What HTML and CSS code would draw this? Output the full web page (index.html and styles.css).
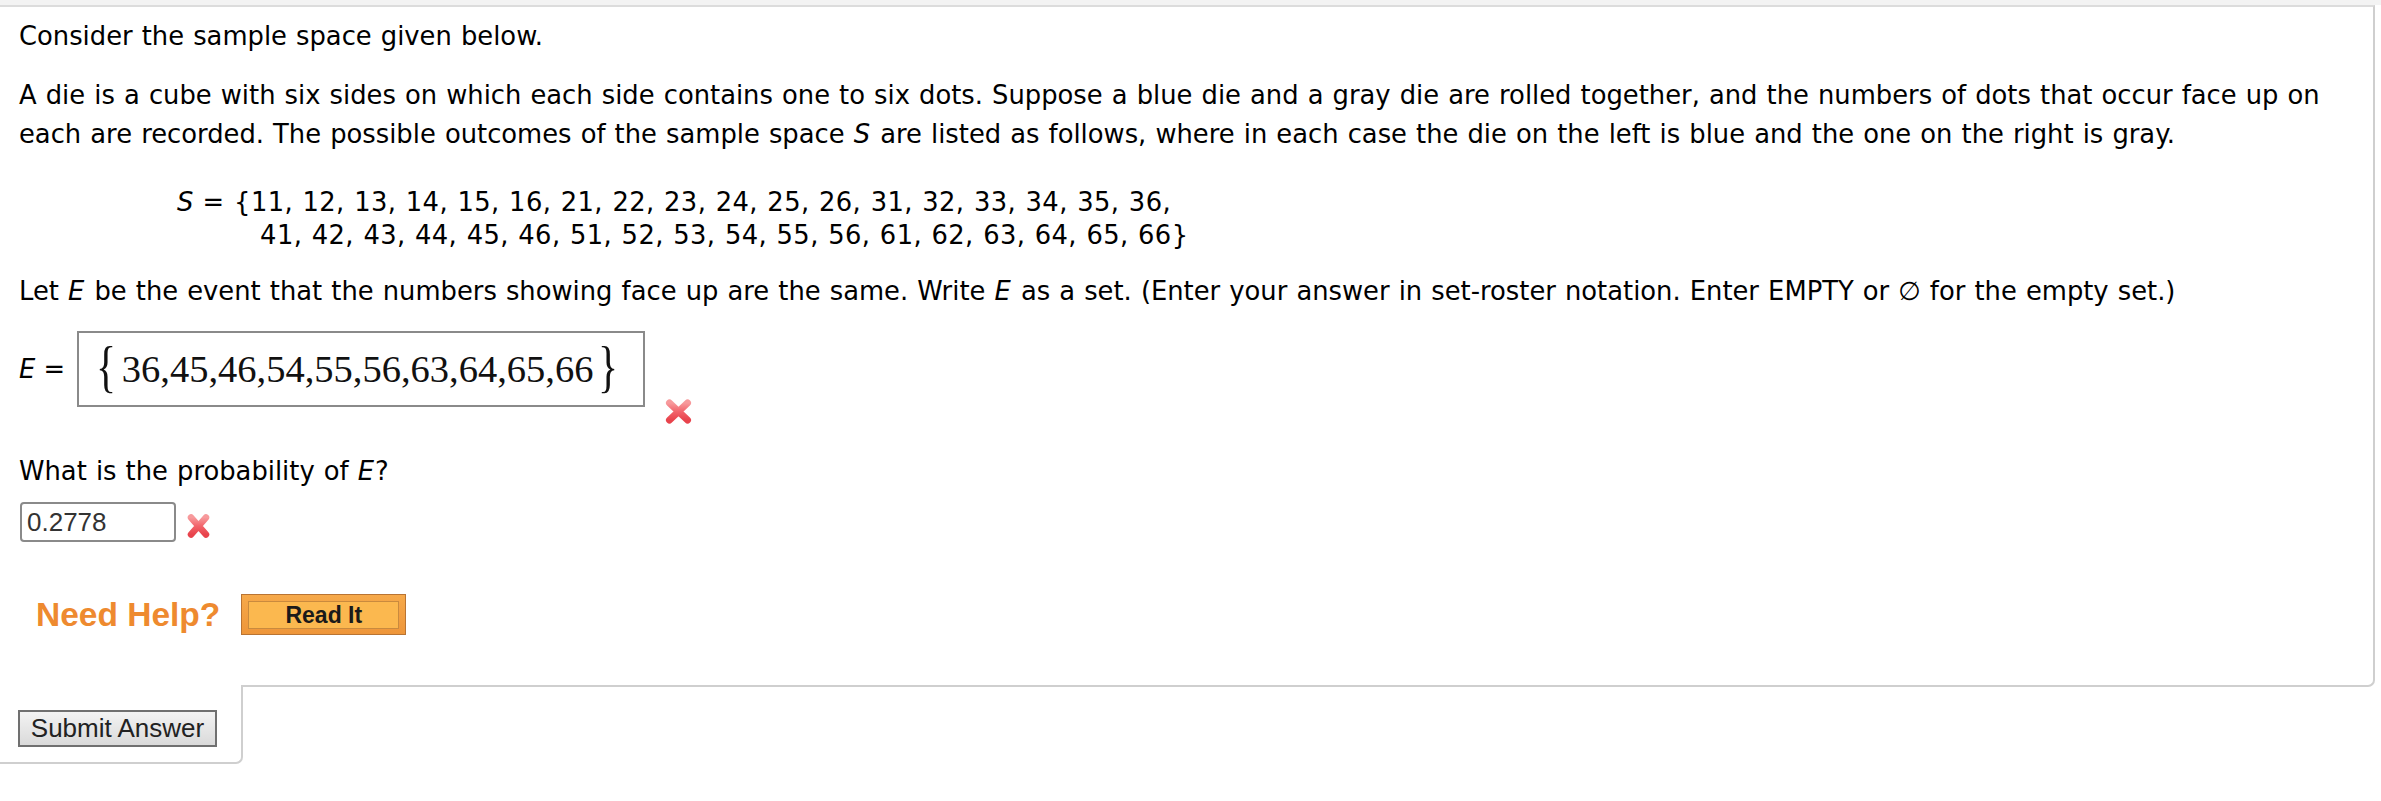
FILE: index.html
```html
<!DOCTYPE html>
<html>
<head>
<meta charset="utf-8">
<link rel="stylesheet" href="styles.css">
</head>
<body>
<div class="topband"></div>
<div class="qbox">
  <p class="p first">Consider the sample space given below.</p>
  <p class="p gap"><span class="line">A die is a cube with six sides on which each side contains one to six dots. Suppose a blue die and a gray die are rolled together, and the numbers of dots that occur face up on</span><span class="line">each are recorded. The possible outcomes of the sample space <i>S</i> are listed as follows, where in each case the die on the left is blue and the one on the right is gray.</span></p>
  <div class="setblock">
    <span class="setlabel"><i>S</i> =</span>
    <div class="setlines">
      <div>{11, 12, 13, 14, 15, 16, 21, 22, 23, 24, 25, 26, 31, 32, 33, 34, 35, 36,</div>
      <div class="cont">41, 42, 43, 44, 45, 46, 51, 52, 53, 54, 55, 56, 61, 62, 63, 64, 65, 66}</div>
    </div>
  </div>
  <p class="p gap">Let <i>E</i> be the event that the numbers showing face up are the same. Write <i>E</i> as a set. (Enter your answer in set-roster notation. Enter EMPTY or ∅ for the empty set.)</p>
  <div class="erow">
    <span class="elabel"><i>E</i> =</span>
    <div class="mathbox"><span class="brace">{</span><span class="mathtext">36,45,46,54,55,56,63,64,65,66</span><span class="brace">}</span></div>
    <svg class="xmark big" viewBox="0 0 31 27"><defs><linearGradient id="xg1" x1="0" y1="0" x2="0" y2="1"><stop offset="0" stop-color="#f79a9c"/><stop offset="0.5" stop-color="#f2646b"/><stop offset="1" stop-color="#e8434c"/></linearGradient></defs><path d="M6.5 5 L24.5 22 M24.5 5 L6.5 22" stroke="url(#xg1)" stroke-width="7" stroke-linecap="round" fill="none"/></svg>
  </div>
  <p class="p prob">What is the probability of <i>E</i>?</p>
  <div class="prow">
    <div class="answer">0.2778</div>
    <svg class="xmark small" viewBox="0 0 27 28"><defs><linearGradient id="xg2" x1="0" y1="0" x2="0" y2="1"><stop offset="0" stop-color="#f79a9c"/><stop offset="0.5" stop-color="#f2646b"/><stop offset="1" stop-color="#e8434c"/></linearGradient></defs><path d="M6 5.5 L21 22.5 M21 5.5 L6 22.5" stroke="url(#xg2)" stroke-width="6.5" stroke-linecap="round" fill="none"/></svg>
  </div>
  <div class="helprow">
    <span class="needhelp">Need Help?</span>
    <span class="readit"><span class="readit-inner">Read It</span></span>
  </div>
</div>
<div class="tab">
  <button class="submit">Submit Answer</button>
</div>
</body>
</html>
```
FILE: styles.css
```css
html, body {
  margin: 0;
  padding: 0;
  background: #ffffff;
}
body {
  font-family: "DejaVu Sans", Verdana, sans-serif;
  font-size: 25.8px;
  color: #000000;
}
.topband {
  height: 5px;
  background: #f3f3f3;
}
.qbox {
  margin-right: 6px;
  border-top: 2px solid #dcdcdc;
  border-right: 2px solid #cfcfcf;
  border-bottom: 2px solid #cfcfcf;
  border-bottom-right-radius: 7px;
  padding: 10px 18px 50px 19px;
  background: #ffffff;
}
.p {
  margin: 0;
  line-height: 39px;
  word-spacing: 0.9px;
}
.p .line {
  display: block;
  white-space: nowrap;
}
.p i {
  padding-right: 1px;
}
.p.gap {
  margin-top: 20px;
}
.setblock {
  display: flex;
  margin-top: 32px;
  padding-left: 158px;
  line-height: 33px;
  word-spacing: 0.9px;
}
.setlabel {
  margin-right: 10px;
  white-space: nowrap;
}
.setlines {
  letter-spacing: 0.38px;
}
.setlines .cont {
  padding-left: 26px;
}
.erow {
  display: flex;
  align-items: flex-start;
  margin-top: 20px;
  height: 94px;
}
.elabel {
  margin-top: 23px;
  width: 58px;
  line-height: 30px;
  white-space: nowrap;
}
.mathbox {
  box-sizing: border-box;
  width: 568px;
  height: 76px;
  border: 2px solid #8a8a8a;
  display: flex;
  align-items: center;
  padding-left: 13px;
  font-family: "Liberation Serif", "DejaVu Serif", serif;
  font-size: 38.5px;
  color: #111;
}
.brace {
  display: inline-block;
  font-size: 58px;
  line-height: 58px;
  transform: scaleX(0.72);
  margin-top: -4px;
}
.mathtext {
  margin: 0 1px 0 2px;
}
.xmark.big {
  width: 31px;
  height: 27px;
  margin-left: 18px;
  margin-top: 67px;
}
.p.prob {
  margin-top: 27px;
}
.prow {
  display: flex;
  align-items: flex-start;
  margin-top: 11px;
  height: 40px;
}
.answer {
  box-sizing: border-box;
  width: 156px;
  height: 40px;
  margin-left: 1px;
  border: 2px solid #8a8a8a;
  border-radius: 4px;
  padding-left: 5px;
  font-family: "Liberation Sans", Arial, sans-serif;
  font-size: 26px;
  line-height: 36px;
  color: #333;
}
.xmark.small {
  width: 27px;
  height: 28px;
  margin-left: 9px;
  margin-top: 10px;
}
.helprow {
  display: flex;
  align-items: center;
  margin-top: 52px;
  height: 41px;
}
.needhelp {
  margin-left: 17px;
  font-family: "Liberation Sans", Arial, sans-serif;
  font-weight: bold;
  font-size: 33.5px;
  color: #ee8a2f;
}
.readit {
  box-sizing: border-box;
  margin-left: 21px;
  width: 165px;
  height: 41px;
  border: 1px solid #b97433;
  padding: 6px 6px 5px 6px;
  background: linear-gradient(#f6a94a, #ee963a);
  display: flex;
}
.readit-inner {
  flex: 1;
  border: 1px solid #c98a3e;
  background: #fbb84f;
  font-family: "Liberation Sans", Arial, sans-serif;
  font-weight: bold;
  font-size: 23px;
  line-height: 26px;
  text-align: center;
  color: #1a1a1a;
}
.tab {
  box-sizing: border-box;
  width: 243px;
  height: 79px;
  margin-top: -2px;
  border-right: 2px solid #cfcfcf;
  border-bottom: 2px solid #cfcfcf;
  border-bottom-right-radius: 7px;
  background: #ffffff;
  padding-top: 25px;
  padding-left: 18px;
}
.submit {
  box-sizing: border-box;
  width: 199px;
  height: 37px;
  margin: 0;
  padding: 0;
  border: 2px solid #707070;
  border-radius: 0;
  background: linear-gradient(#f3f3f3, #dadada);
  font-family: "Liberation Sans", Arial, sans-serif;
  font-size: 26px;
  line-height: 33px;
  color: #222;
}
```
